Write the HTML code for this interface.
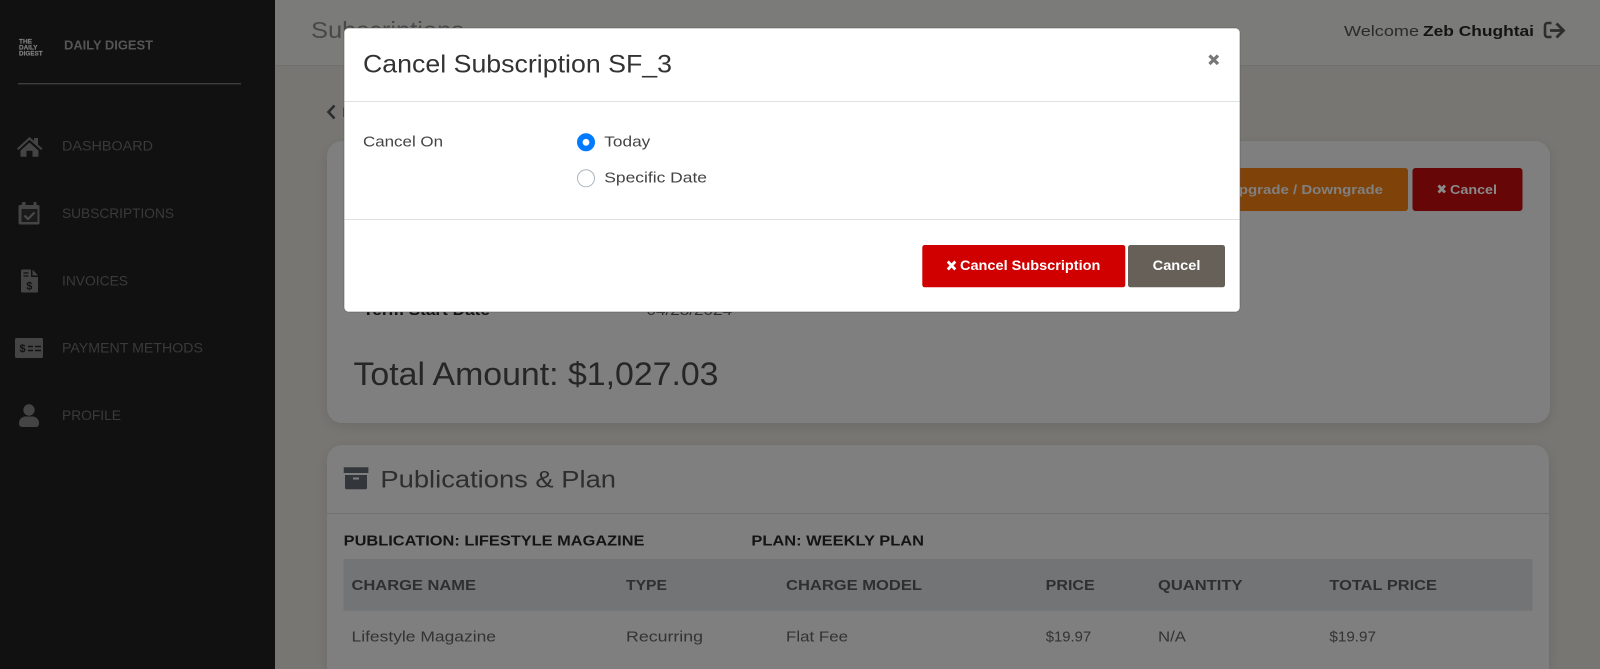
<!DOCTYPE html>
<html lang="en">
<head>
<meta charset="utf-8">
<title>Cancel Subscription SF_3</title>
<style>
html,body{margin:0;padding:0;width:1600px;height:669px;overflow:hidden;background:#777672}
svg{display:block;position:absolute;left:0;top:0;filter:blur(.35px)}
text{font-family:"Liberation Sans",sans-serif;white-space:pre}
.b{font-weight:bold}
</style>
</head>
<body>
<svg width="1600" height="669" viewBox="0 0 1600 669" xmlns="http://www.w3.org/2000/svg">
<defs>
<filter id="sh" x="-5%" y="-10%" width="110%" height="125%"><feDropShadow dx="0" dy="3" stdDeviation="6" flood-color="#000" flood-opacity=".1"/></filter>
</defs>

<!-- page background -->
<rect x="0" y="0" width="1600" height="669" fill="#777672"/>

<!-- top bar -->
<rect x="275" y="0" width="1325" height="65" fill="#7b7b79"/>
<rect x="275" y="65" width="1325" height="1" fill="#6f6f6d"/>
<text x="311" y="38" font-size="23" fill="#484848" textLength="153" lengthAdjust="spacingAndGlyphs">Subscriptions</text>
<text x="1344" y="36" font-size="15" fill="#2a2a2a" textLength="75" lengthAdjust="spacingAndGlyphs">Welcome</text>
<text x="1423" y="36" font-size="15" class="b" fill="#141414" textLength="111" lengthAdjust="spacingAndGlyphs">Zeb Chughtai</text>
<path d="M1551.5 23h-4a2.5 2.5 0 0 0-2.5 2.500v9a2.500 2.500 0 0 0 2.500 2.500h4" fill="none" stroke="#2d2d2d" stroke-width="2.6"/>
<path d="M1550 30.500h12M1556.500 23.500l7 7-7 7" fill="none" stroke="#2d2d2d" stroke-width="2.800"/>

<!-- back link -->
<path d="M334.500 105.500l-6 6.500 6 6.500" fill="none" stroke="#2b2d30" stroke-width="2.600"/>
<text x="342" y="117" font-size="14" fill="#2b2b2b">Back</text>

<!-- summary card -->
<rect x="327" y="141" width="1223" height="282" rx="15" fill="#7f7f7f" filter="url(#sh)"/>
<rect x="1200" y="168" width="208" height="43" rx="3" fill="#7f4209"/>
<text x="1228" y="194" font-size="13" class="b" fill="#808080" textLength="155" lengthAdjust="spacingAndGlyphs">Upgrade / Downgrade</text>
<rect x="1412.500" y="168" width="110" height="43" rx="3" fill="#660606"/>
<path d="M1438.500 185.500l6.500 7m0-7l-6.500 7" stroke="#8a8a8a" stroke-width="2.800"/>
<text x="1450" y="194" font-size="13" class="b" fill="#8a8a8a" textLength="47" lengthAdjust="spacingAndGlyphs">Cancel</text>
<text x="363" y="315" font-size="15" class="b" fill="#111" textLength="127" lengthAdjust="spacingAndGlyphs">Term Start Date</text>
<text x="646.500" y="315" font-size="14" fill="#2a2a2a" textLength="85.500" lengthAdjust="spacingAndGlyphs">04/28/2024</text>
<text x="353.500" y="385" font-size="32" fill="#262626" textLength="365" lengthAdjust="spacingAndGlyphs">Total Amount: $1,027.03</text>

<!-- publications card -->
<path d="M342 445h1192a15 15 0 0 1 15 15v209H327V460a15 15 0 0 1 15-15z" fill="#7f7f7f" filter="url(#sh)"/>
<rect x="327" y="513" width="1222" height="1" fill="#707070"/>
<path d="M343.700 467.300h24.700v5.700h-24.700z" fill="#33373c"/>
<path d="M345 475h22v12.600a1.700 1.700 0 0 1-1.700 1.700h-18.600a1.700 1.700 0 0 1-1.700-1.700zM353 477.500v2h6v-2z" fill="#33373c" fill-rule="evenodd"/>
<text x="380.400" y="487.300" font-size="24" fill="#2e2e2e" textLength="235.600" lengthAdjust="spacingAndGlyphs">Publications &amp; Plan</text>
<text x="343.700" y="545.300" font-size="14.500" class="b" fill="#141414" textLength="300.800" lengthAdjust="spacingAndGlyphs">PUBLICATION: LIFESTYLE MAGAZINE</text>
<text x="751.400" y="545.300" font-size="14.500" class="b" fill="#141414" textLength="172.600" lengthAdjust="spacingAndGlyphs">PLAN: WEEKLY PLAN</text>
<rect x="343.500" y="559" width="1189" height="51.700" fill="#727476"/>
<g font-size="14.500" fill="#2d2f31" font-weight="bold">
  <text x="351.500" y="590" textLength="124.500" lengthAdjust="spacingAndGlyphs">CHARGE NAME</text>
  <text x="626" y="590" textLength="41" lengthAdjust="spacingAndGlyphs">TYPE</text>
  <text x="786" y="590" textLength="136" lengthAdjust="spacingAndGlyphs">CHARGE MODEL</text>
  <text x="1045.700" y="590" textLength="49" lengthAdjust="spacingAndGlyphs">PRICE</text>
  <text x="1158" y="590" textLength="84.500" lengthAdjust="spacingAndGlyphs">QUANTITY</text>
  <text x="1329.400" y="590" textLength="107.600" lengthAdjust="spacingAndGlyphs">TOTAL PRICE</text>
</g>
<g font-size="15" fill="#333">
  <text x="351.500" y="641.700" textLength="144.500" lengthAdjust="spacingAndGlyphs">Lifestyle Magazine</text>
  <text x="626" y="641.700" textLength="77" lengthAdjust="spacingAndGlyphs">Recurring</text>
  <text x="786" y="641.700" textLength="62" lengthAdjust="spacingAndGlyphs">Flat Fee</text>
  <text x="1045.700" y="641.700" textLength="45.500" lengthAdjust="spacingAndGlyphs">$19.97</text>
  <text x="1158" y="641.700" textLength="28" lengthAdjust="spacingAndGlyphs">N/A</text>
  <text x="1329.400" y="641.700" textLength="46.600" lengthAdjust="spacingAndGlyphs">$19.97</text>
</g>

<!-- sidebar -->
<rect x="0" y="0" width="275" height="669" fill="#111"/>
<g font-size="6.500" font-weight="bold" fill="#7f7f7f" stroke="#7f7f7f" stroke-width=".2">
  <text x="19" y="43.300" textLength="13" lengthAdjust="spacingAndGlyphs">THE</text>
  <text x="19" y="49.400" textLength="18.500" lengthAdjust="spacingAndGlyphs">DAILY</text>
  <text x="19" y="55.700" textLength="23.600" lengthAdjust="spacingAndGlyphs">DIGEST</text>
</g>
<text x="64" y="49.500" font-size="13" class="b" fill="#555" textLength="89" lengthAdjust="spacingAndGlyphs">DAILY DIGEST</text>
<rect x="18" y="83" width="223" height="1.400" fill="#3e3e3e"/>

<!-- home -->
<path d="M17 148.500L29.500 137l4.500 4v-3h4v6.700l4.500 3.800-1.400 1.500-11.600-10.300-11.100 10.300z" fill="#444"/>
<path d="M20.500 150.500l9-8 9 8v5.500a.8.8 0 0 1-.8.8h-5.200v-6h-6v6h-5.200a.8.8 0 0 1-.8-.8z" fill="#444"/>
<!-- calendar check -->
<path d="M22.500 202h3v3h8v-3h3v3h1.500a1.500 1.500 0 0 1 1.500 1.500v16.500a1.500 1.500 0 0 1-1.500 1.500h-18a1.500 1.500 0 0 1-1.500-1.500v-16.500a1.500 1.500 0 0 1 1.500-1.500h1.500zM21.500 209v13h16v-13z" fill="#444" fill-rule="evenodd"/>
<rect x="21.500" y="209" width="16" height="13" fill="#1a1a1a"/>
<path d="M24.500 215.500l3.500 3.500 6.500-6.500" fill="none" stroke="#4a4a4a" stroke-width="2.200"/>
<!-- invoice -->
<path d="M21 271a1.500 1.500 0 0 1 1.500-1.500h8.500v7.500h7v14.500a1 1 0 0 1-1 1h-15a1 1 0 0 1-1-1z" fill="#444"/>
<path d="M32.500 269.500l5.500 6h-5.500z" fill="#444"/>
<path d="M23.500 273h5M23.500 276h5" stroke="#111" stroke-width="1.200"/>
<text x="29.300" y="289.300" font-size="11" font-weight="bold" fill="#111" text-anchor="middle">$</text>
<!-- money -->
<rect x="15" y="338" width="28" height="20" rx="1.500" fill="#444"/>
<text x="22.500" y="352" font-size="11" font-weight="bold" fill="#111" text-anchor="middle">$</text>
<path d="M28 346.500h5M35 346.500h6M28 350.500h5M35 350.500h6" stroke="#111" stroke-width="1.500"/>
<!-- user -->
<circle cx="29" cy="410" r="5.700" fill="#444"/>
<path d="M19 423a6.500 6.500 0 0 1 6.500-6.500h7a6.500 6.500 0 0 1 6.500 6.500v1a3 3 0 0 1-3 3h-14a3 3 0 0 1-3-3z" fill="#444"/>

<g font-size="14" fill="#3a3a3a">
  <text x="62" y="150.700" textLength="91" lengthAdjust="spacingAndGlyphs">DASHBOARD</text>
  <text x="62" y="218" textLength="112" lengthAdjust="spacingAndGlyphs">SUBSCRIPTIONS</text>
  <text x="62" y="285.300" textLength="66" lengthAdjust="spacingAndGlyphs">INVOICES</text>
  <text x="62" y="352.600" textLength="141" lengthAdjust="spacingAndGlyphs">PAYMENT METHODS</text>
  <text x="62" y="420" textLength="59" lengthAdjust="spacingAndGlyphs">PROFILE</text>
</g>

<!-- modal -->
<rect x="344" y="28" width="896" height="284" rx="4.500" fill="#fff" stroke="#5a5a5a" stroke-opacity=".55" stroke-width="1"/>
<text x="363" y="72.700" font-size="25" fill="#333" textLength="309" lengthAdjust="spacingAndGlyphs">Cancel Subscription SF_3</text>
<path d="M1209.500 55.500l8.500 8.500m0-8.500l-8.500 8.500" stroke="#777" stroke-width="3.200"/>
<rect x="344.500" y="101" width="895" height="1" fill="#dfe2e5"/>
<text x="363" y="146.700" font-size="15" fill="#444" textLength="80" lengthAdjust="spacingAndGlyphs">Cancel On</text>
<circle cx="586" cy="142.300" r="6.200" fill="#fff" stroke="#007bff" stroke-width="5.600"/>
<text x="604.300" y="146.700" font-size="15" fill="#444" textLength="46" lengthAdjust="spacingAndGlyphs">Today</text>
<circle cx="586" cy="178.300" r="8.500" fill="#fff" stroke="#adb5bd" stroke-width="1"/>
<text x="604.300" y="182.300" font-size="15" fill="#444" textLength="102.700" lengthAdjust="spacingAndGlyphs">Specific Date</text>
<rect x="344.500" y="219" width="895" height="1" fill="#dfe2e5"/>
<rect x="922.300" y="245" width="203" height="42.300" rx="2.500" fill="#d10000"/>
<path d="M947.800 261.500l7.500 8m0-8l-7.500 8" stroke="#fff" stroke-width="2.800"/>
<text x="960" y="270" font-size="13.500" class="b" fill="#fff" textLength="140.400" lengthAdjust="spacingAndGlyphs">Cancel Subscription</text>
<rect x="1128" y="245" width="97" height="42.300" rx="2.500" fill="#666059"/>
<text x="1152.700" y="270" font-size="13.500" class="b" fill="#fff" textLength="47.700" lengthAdjust="spacingAndGlyphs">Cancel</text>
</svg>
</body>
</html>
